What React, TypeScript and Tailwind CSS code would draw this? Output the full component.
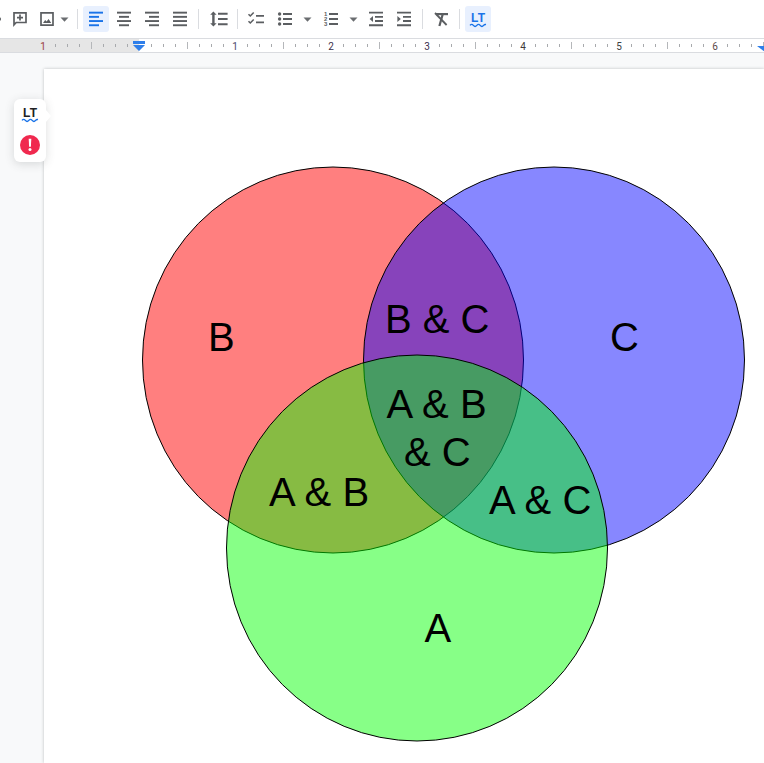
import React from "react";

const Icon = ({ className = "", children }: { className?: string; children: React.ReactNode }) => (
  <svg viewBox="0 0 18 18" className={`w-[18px] h-[18px] shrink-0 ${className || "text-[#5b5e61]"}`} fill="currentColor">
    {children}
  </svg>
);

const SideIcon = ({ className = "", children }: { className?: string; children: React.ReactNode }) => (
  <svg viewBox="0 0 18 18" className={`w-[18px] h-[18px] shrink-0 text-[#5b5e61] ${className}`} fill="currentColor">
    {children}
  </svg>
);

const Caret = ({ className = "" }: { className?: string }) => (
  <svg viewBox="0 0 9 5" className={`w-[9px] h-[5px] shrink-0 text-[#6a6d70] ${className}`} fill="currentColor">
    <path d="M.5 .5h8L4.5 4.7z" />
  </svg>
);

const Sep = ({ className = "" }: { className?: string }) => (
  <div className={`w-px h-5 shrink-0 bg-[#dadce0] ${className}`} />
);

const Rows = ({ rows }: { rows: [number, number][] }) => (
  <>
    {rows.map(([x, w], i) => (
      <rect key={i} x={x} y={[1.7, 5.9, 10.1, 14.3][i]} width={w} height="1.9" />
    ))}
  </>
);

const LtLogo = ({ color }: { color: string }) => (
  <svg viewBox="0 0 18 18" className="w-[18px] h-[18px] shrink-0 overflow-visible">
    <text x="2" y="12" fontSize="12" fontWeight="700" fill={color} fontFamily="'Liberation Sans', sans-serif" letterSpacing="0.3">
      LT
    </text>
    <path d="M1 15.4c1.2-1.4 2.2-1.4 3.4 0s2.2 1.4 3.4 0 2.2-1.4 3.4 0 2.2 1.4 3.4 0 1.6-1 2.4-.8" fill="none" stroke="#1a73e8" strokeWidth="1.4" />
  </svg>
);

const inches = [
  [43, "1", "#9a3b3b"],
  [235, "1", "#4a4a6a"],
  [331, "2", "#3c2f4a"],
  [427, "3", "#3c3050"],
  [523, "4", "#403a3a"],
  [619, "5", "#3c4043"],
  [715, "6", "#5c4a48"],
] as const;

const ticks = Array.from({ length: 61 }, (_, i) => 43 + i * 12).filter((x) => (x - 43) % 96 !== 0 && x !== 139);

const Ruler = () => (
  <div className="relative flex h-[15px] shrink-0 border-y border-[#dadce0] bg-white">
    <div className="w-[139px] bg-[#e6e6e6]" />
    <div className="flex-1" />
    <svg viewBox="0 0 764 13" className="absolute left-0 top-0 w-[764px] h-[13px]">
      {ticks.map((x) => {
        const long = (x - 43) % 48 === 0;
        return (
          <rect key={x} x={x} y={long ? 3 : 5} width="1" height={long ? 7 : 3} fill={long ? "#b5b7ba" : "#a8aaad"} />
        );
      })}
      {inches.map(([x, t, c]) => (
        <text key={x} x={x} y="10.5" textAnchor="middle" fontSize="10" fill={c} fontFamily="'Roboto', sans-serif">
          {t}
        </text>
      ))}
      <path d="M133 2h12v3h-12zM133 6h12l-6 6z" fill="#2f7fea" />
      <path d="M757 7h8v6z" fill="#2f7fea" />
    </svg>
  </div>
);

const Toolbar = () => (
  <div className="flex h-[38px] shrink-0 items-center bg-white">
    <div className="-ml-[3px] w-1 h-1 shrink-0 rounded-full bg-[#5b5e61]" />
    <SideIcon className="ml-[10px]">
      <path d="M3 2.8h12v9.7H5.2L3 14.8z" fill="none" stroke="currentColor" strokeWidth="1.7" />
      <path d="M9 4.6v6M6 7.6h6" fill="none" stroke="currentColor" strokeWidth="1.7" />
    </SideIcon>
    <SideIcon className="ml-[9px]">
      <path d="M3 2.8h12v12.4H3z" fill="none" stroke="currentColor" strokeWidth="1.7" />
      <path d="M5 13l2.2-3 1.4 1.6L10.6 9l2.6 4z" />
    </SideIcon>
    <Caret className="ml-1" />
    <Sep className="ml-2" />
    <div className="ml-[5px] flex h-[26px] w-[26px] shrink-0 items-center justify-center rounded-[3px] bg-[#e8f0fe]">
      <Icon className="text-[#1a73e8]">
        <Rows rows={[[2, 14], [2, 10], [2, 14], [2, 10]]} />
      </Icon>
    </div>
    <SideIcon className="ml-[6px]">
      <Rows rows={[[2, 14], [4, 10], [2, 14], [4, 10]]} />
    </SideIcon>
    <SideIcon className="ml-[10px]">
      <Rows rows={[[2, 14], [6, 10], [2, 14], [6, 10]]} />
    </SideIcon>
    <SideIcon className="ml-[10px]">
      <Rows rows={[[2, 14], [2, 14], [2, 14], [2, 14]]} />
    </SideIcon>
    <Sep className="ml-[9px]" />
    <SideIcon className="ml-[11px]">
      <path d="M3.4 1.4l3.2 3.4H4.6v8.4h2l-3.2 3.4-3.2-3.4h2V4.8h-2z" />
      <path d="M8 2.8h9.6v1.9H8zM8 8.1h9.6V10H8zM8 13.3h9.6v1.9H8z" />
    </SideIcon>
    <Sep className="ml-[9px]" />
    <SideIcon className="ml-[9px]">
      <path d="M1.5 4.2l1.8 1.8 3.4-3.6M1.5 11.2L3.3 13l3.4-3.6" fill="none" stroke="currentColor" strokeWidth="1.5" />
      <path d="M9 5h8v1.8H9zM9 11.5h8v1.8H9z" />
    </SideIcon>
    <SideIcon className="ml-[11px]">
      <circle cx="3.6" cy="4" r="1.7" />
      <circle cx="3.6" cy="9" r="1.7" />
      <circle cx="3.6" cy="14" r="1.7" />
      <path d="M7 3h9v2H7zM7 8h9v2H7zM7 13h9v2H7z" />
    </SideIcon>
    <Caret className="ml-[9px]" />
    <SideIcon className="ml-[10px]">
      <text x="2" y="6" fontSize="6" fontWeight="700" fontFamily="'Liberation Sans', sans-serif" fill="currentColor">1</text>
      <text x="2" y="11.2" fontSize="6" fontWeight="700" fontFamily="'Liberation Sans', sans-serif" fill="currentColor">2</text>
      <text x="2" y="16.4" fontSize="6" fontWeight="700" fontFamily="'Liberation Sans', sans-serif" fill="currentColor">3</text>
      <path d="M7 3h9v2H7zM7 8h9v2H7zM7 13h9v2H7z" />
    </SideIcon>
    <Caret className="ml-[9px]" />
    <SideIcon className="ml-[9px]">
      <path d="M2 1.7h14v1.9H2zM8 5.9h8v1.9H8zM8 10.1h8V12H8zM2 14.3h14v1.9H2z" />
      <path d="M6 6v6L2.6 9z" />
    </SideIcon>
    <SideIcon className="ml-[10px]">
      <path d="M2 1.7h14v1.9H2zM8 5.9h8v1.9H8zM8 10.1h8V12H8zM2 14.3h14v1.9H2z" />
      <path d="M2.4 6v6L5.8 9z" />
    </SideIcon>
    <Sep className="ml-[9px]" />
    <SideIcon className="ml-[9px]">
      <path d="M4 3h12v2.2H4z" />
      <path d="M10.8 4L7.4 16" fill="none" stroke="currentColor" strokeWidth="2.2" />
      <path d="M3 3l11.6 12" fill="none" stroke="currentColor" strokeWidth="1.8" />
    </SideIcon>
    <Sep className="ml-[9px]" />
    <div className="ml-[5px] flex h-[26px] w-[26px] shrink-0 items-center justify-center rounded-[3px] bg-[#e8f0fe]">
      <LtLogo color="#1a73e8" />
    </div>
  </div>
);

const Venn = () => (
  <svg viewBox="44 69 720 694" className="block w-[720px] h-[694px]">
    <g stroke="#000" strokeWidth="1">
      <ellipse cx="333" cy="360" rx="190.5" ry="193" fill="#ff0000" fillOpacity="0.5" />
      <ellipse cx="554" cy="360" rx="190.5" ry="193" fill="#0000ff" fillOpacity="0.47" />
      <ellipse cx="417" cy="548" rx="190.5" ry="193" fill="#00ff00" fillOpacity="0.47" />
    </g>
    <g fontSize="40" fontFamily="'Liberation Sans', Arial, sans-serif" fill="#000">
      <text x="208" y="351">B</text>
      <text x="610" y="351">C</text>
      <text x="385" y="333">B &amp; C</text>
      <text x="386.5" y="418">A &amp; B</text>
      <text x="404" y="466">&amp; C</text>
      <text x="269" y="506">A &amp; B</text>
      <text x="489" y="514">A &amp; C</text>
      <text x="424.5" y="642">A</text>
    </g>
  </svg>
);

export default function App() {
  return (
    <div className="relative flex h-[763px] w-[764px] flex-col overflow-hidden bg-[#f8f9fa] font-['Liberation_Sans',sans-serif]">
      <Toolbar />
      <Ruler />
      <div className="flex-1 min-h-0 pl-[44px] pt-4">
        <div className="h-[694px] w-[720px] bg-white shadow-[0_0_3px_rgba(60,64,67,0.3)]">
          <Venn />
        </div>
      </div>
      <div className="absolute left-[14px] top-[99px] flex h-[63px] w-8 flex-col items-center rounded-md bg-white pt-[6px] shadow-[0_2px_10px_rgba(60,64,67,0.18)]">
        <LtLogo color="#202124" />
        <svg viewBox="0 0 20 20" className="mt-[12px] h-5 w-5 shrink-0">
          <circle cx="10" cy="10" r="10" fill="#f0294f" />
          <path d="M8.7 3.8h2.6l-.4 8h-1.8z" fill="#fff" />
          <circle cx="10" cy="14.6" r="1.5" fill="#fff" />
        </svg>
        <div className="absolute left-full top-[11px] h-0 w-0 border-y-[6px] border-l-[5px] border-y-transparent border-l-white" />
      </div>
    </div>
  );
}
